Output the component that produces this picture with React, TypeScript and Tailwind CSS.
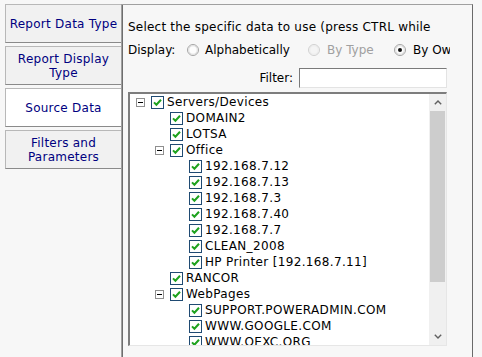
import React from "react";

type TreeRow = { label: string; level: number; expander?: boolean };

const rows: TreeRow[] = [
  { label: "Servers/Devices", level: 0, expander: true },
  { label: "DOMAIN2", level: 1 },
  { label: "LOTSA", level: 1 },
  { label: "Office", level: 1, expander: true },
  { label: "192.168.7.12", level: 2 },
  { label: "192.168.7.13", level: 2 },
  { label: "192.168.7.3", level: 2 },
  { label: "192.168.7.40", level: 2 },
  { label: "192.168.7.7", level: 2 },
  { label: "CLEAN_2008", level: 2 },
  { label: "HP Printer [192.168.7.11]", level: 2 },
  { label: "RANCOR", level: 1 },
  { label: "WebPages", level: 1, expander: true },
  { label: "SUPPORT.POWERADMIN.COM", level: 2 },
  { label: "WWW.GOOGLE.COM", level: 2 },
  { label: "WWW.OEXC.ORG", level: 2 },
];

const indent = ["pl-0", "pl-[19px]", "pl-[38px]"];

const tabs = [
  { label: ["Report Data Type"] },
  { label: ["Report Display", "Type"] },
  { label: ["Source Data"], active: true },
  { label: ["Filters and", "Parameters"] },
];

function Check() {
  return (
    <svg width="13" height="13" viewBox="0 0 13 13" className="shrink-0">
      <rect x="0.5" y="0.5" width="12" height="12" fill="#fff" stroke="#1f4a72" />
      <path d="M3 6.4 L5.4 8.8 L10 3.8" fill="none" stroke="#1ea21e" strokeWidth="2" />
    </svg>
  );
}

function Expander() {
  return (
    <svg width="9" height="9" viewBox="0 0 9 9" className="shrink-0">
      <rect x="0.5" y="0.5" width="8" height="8" fill="#fff" stroke="#8f8f8f" />
      <path d="M2 4.5 H7" stroke="#000" strokeWidth="1" />
    </svg>
  );
}

function Radio({ checked, disabled }: { checked?: boolean; disabled?: boolean }) {
  return (
    <svg width="12" height="12" viewBox="0 0 12 12" className="shrink-0">
      <circle cx="6" cy="6" r="5.5" fill={disabled ? "#f4f4f4" : "#fdfdfd"} stroke={disabled ? "#d0d0d0" : "#a4a4a4"} />
      <circle cx="6" cy="6" r="4.3" fill="none" stroke={disabled ? "#ececec" : "#dcdcdc"} />
      {checked && <circle cx="6" cy="6" r="2" fill="#111" />}
    </svg>
  );
}

export default function App() {
  return (
    <div className="flex h-[357px] w-[482px] overflow-hidden bg-[#f7f7f7] font-['DejaVu_Sans',sans-serif] text-[12px] leading-[16px] text-black">
      {/* tabs */}
      <div className="flex w-[121px] shrink-0 flex-col gap-[3px] pl-[5px] pt-[4px]">
        {tabs.map((t) => (
          <div
            key={t.label.join(" ")}
            className={`flex h-[39px] flex-col items-center justify-center border-y border-l border-[#b8b8b8] border-b-[#8a8a8a] text-center leading-[14px] tracking-[0.25px] text-[#000080] ${
              t.active ? "bg-white" : "bg-[#f1f1f1]"
            }`}
          >
            {t.label.map((l) => (
              <span key={l}>{l}</span>
            ))}
          </div>
        ))}
      </div>

      {/* panel */}
      <div className="mt-[4px] h-[400px] w-[352px] shrink-0 border-l border-r border-t border-[#a0a0a0] border-r-[#6a6a6a] pl-[6px] pt-[14px] shadow-[inset_1px_0_0_#6e6e6e]">
        <div className="w-[322px] overflow-hidden whitespace-nowrap">
          <div className="tracking-[0.22px]">Select the specific data to use (press CTRL while</div>

          <div className="mt-[7px] flex h-[16px] items-center">
            <div className="w-[59px] shrink-0">Display:</div>
            <div className="flex w-[121px] shrink-0 items-center gap-[6px]">
              <Radio />
              <span>Alphabetically</span>
            </div>
            <div className="flex w-[86px] shrink-0 items-center gap-[7px] text-[#a0a0a0]">
              <Radio disabled />
              <span>By Type</span>
            </div>
            <div className="flex shrink-0 items-center gap-[7px]">
              <Radio checked />
              <span>By Owner</span>
            </div>
          </div>

          <div className="mt-[10px] flex w-[319px] items-center justify-end gap-[6px]">
            <span>Filter:</span>
            <div className="h-[20px] w-[148px] border border-[#e3e3e3] border-l-[#7a7a7a] border-t-[#7a7a7a] bg-white" />
          </div>

          <div className="mt-[4px] flex h-[254px] w-[319px] border-b border-l-2 border-r border-t-2 border-[#7d7d7d] border-b-[#e6e6e6] border-r-[#e6e6e6] bg-white">
            <div className="min-w-0 flex-1 overflow-hidden tracking-[0.35px]">
              {rows.map((r) => (
                <div key={r.label} className={`flex h-[16px] items-center ${indent[r.level]}`}>
                  <div className="flex w-[21px] shrink-0 items-center pl-[6px]">
                    {r.expander && <Expander />}
                  </div>
                  <Check />
                  <span className="ml-[3px]">{r.label}</span>
                </div>
              ))}
            </div>

            {/* scrollbar */}
            <div className="flex w-[17px] shrink-0 flex-col bg-[#f0f0f0]">
              <div className="flex h-[17px] items-center justify-center">
                <svg width="8" height="5" viewBox="0 0 8 5">
                  <path d="M0.8 4.2 L4 1 L7.2 4.2" fill="none" stroke="#606060" strokeWidth="1.4" />
                </svg>
              </div>
              <div className="mx-px h-[171px] bg-[#cdcdcd]" />
              <div className="flex-1" />
              <div className="flex h-[17px] items-center justify-center">
                <svg width="8" height="5" viewBox="0 0 8 5">
                  <path d="M0.8 0.8 L4 4 L7.2 0.8" fill="none" stroke="#606060" strokeWidth="1.4" />
                </svg>
              </div>
            </div>
          </div>
        </div>
      </div>
    </div>
  );
}
